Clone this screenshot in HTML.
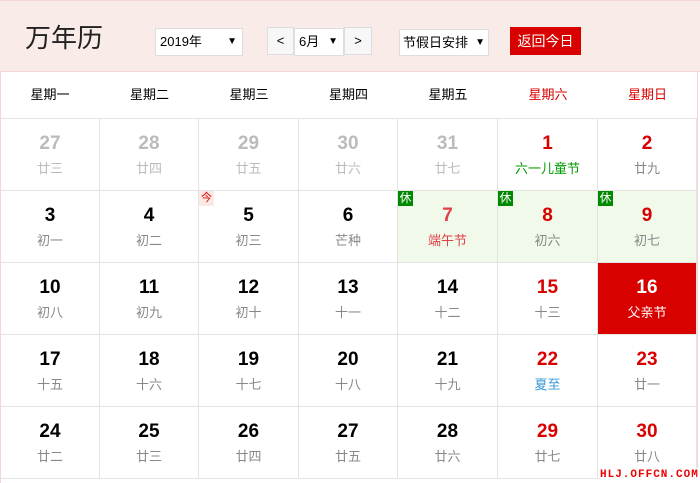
<!DOCTYPE html>
<html><head><meta charset="utf-8"><style>
*{margin:0;padding:0;box-sizing:border-box}
body{width:700px;height:483px;background:#fff;font-family:"Liberation Sans","Noto Sans CJK SC",sans-serif;position:relative;overflow:hidden}
.hd{position:absolute;left:0;top:0;width:700px;height:72px;background:#f9ebe8;border-top:1px solid #f2d8d4;border-bottom:1px solid #f2d8d4}
.title{position:absolute;left:25px;top:17px;font-size:26px;color:#222}
.sel{position:absolute;background:#fff;border:1px solid #ddd;font-size:13px;color:#000;line-height:26px;padding-left:4px}
.sel .ar{position:absolute;right:5px;top:0;font-size:10px}
.btn{position:absolute;background:#f7f7f7;border:1px solid #ddd;font-size:13px;line-height:26px;text-align:center}
.today{position:absolute;left:510px;top:26px;width:71px;height:28px;background:#d90000;color:#fff;font-size:14px;line-height:28px;text-align:center}
.wk{position:absolute;top:72px;height:46px;line-height:46px;text-align:center;font-size:13px;color:#000}
.grid{position:absolute;left:1px;top:118px;display:grid;grid-template-columns:99px 99px 100px 99px 100px 100px 99px;grid-template-rows:repeat(5,72px)}
.c{position:relative;border-right:1px solid #e3e3e3;border-top:1px solid #e3e3e3;text-align:center}
.n{position:absolute;left:0;right:0;top:14px;font-size:19px;font-weight:bold;line-height:22px}
.l{position:absolute;left:0;right:0;top:42px;font-size:13px;color:#888;line-height:16px}
.g .n,.g .l{color:#bbb}
.r .n{color:#d90000}
.hol{background:#f1f9ea}
.xiu{position:absolute;left:0;top:0;width:15px;height:15px;background:#080;color:#fff;font-size:12px;line-height:15px;text-align:center}
.jin{position:absolute;left:0;top:0;width:15px;height:15px;background:#fbe9e6;color:#d00;font-size:11px;line-height:15px;text-align:center}
</style></head><body>
<div class="hd">
<div class="title">万年历</div>
<div class="sel" style="left:155px;top:27px;width:88px;height:28px">2019年<span class="ar">▼</span></div>
<div class="btn" style="left:267px;top:26px;width:27px;height:28px">&lt;</div>
<div class="sel" style="left:294px;top:27px;width:50px;height:28px">6月<span class="ar">▼</span></div>
<div class="btn" style="left:344px;top:26px;width:28px;height:28px">&gt;</div>
<div class="sel" style="left:399px;top:28px;width:90px;height:27px;padding-left:3px">节假日安排<span class="ar" style="right:3px">▼</span></div>
<div class="today">返回今日</div>
</div>
<div style="position:absolute;left:697px;top:72px;width:1px;height:411px;background:#f2d8d4"></div>
<div style="position:absolute;left:0;top:72px;width:1px;height:411px;background:#f2d8d4"></div>
<div class="wk" style="left:0;width:100px">星期一</div>
<div class="wk" style="left:100px;width:99px">星期二</div>
<div class="wk" style="left:199px;width:100px">星期三</div>
<div class="wk" style="left:299px;width:99px">星期四</div>
<div class="wk" style="left:398px;width:100px">星期五</div>
<div class="wk" style="left:498px;width:100px;color:#d90000">星期六</div>
<div class="wk" style="left:598px;width:99px;color:#d90000">星期日</div>
<div class="grid">
<div class="c g"><div class="n">27</div><div class="l">廿三</div></div>
<div class="c g"><div class="n">28</div><div class="l">廿四</div></div>
<div class="c g"><div class="n">29</div><div class="l">廿五</div></div>
<div class="c g"><div class="n">30</div><div class="l">廿六</div></div>
<div class="c g"><div class="n">31</div><div class="l">廿七</div></div>
<div class="c r"><div class="n">1</div><div class="l" style="color:#090">六一儿童节</div></div>
<div class="c r"><div class="n">2</div><div class="l">廿九</div></div>

<div class="c"><div class="n">3</div><div class="l">初一</div></div>
<div class="c"><div class="n">4</div><div class="l">初二</div></div>
<div class="c"><div class="jin">今</div><div class="n">5</div><div class="l">初三</div></div>
<div class="c"><div class="n">6</div><div class="l">芒种</div></div>
<div class="c r hol"><div class="xiu">休</div><div class="n" style="color:#e0404a">7</div><div class="l" style="color:#e0404a">端午节</div></div>
<div class="c r hol"><div class="xiu">休</div><div class="n">8</div><div class="l">初六</div></div>
<div class="c r hol"><div class="xiu">休</div><div class="n">9</div><div class="l">初七</div></div>

<div class="c"><div class="n">10</div><div class="l">初八</div></div>
<div class="c"><div class="n">11</div><div class="l">初九</div></div>
<div class="c"><div class="n">12</div><div class="l">初十</div></div>
<div class="c"><div class="n">13</div><div class="l">十一</div></div>
<div class="c"><div class="n">14</div><div class="l">十二</div></div>
<div class="c r"><div class="n">15</div><div class="l">十三</div></div>
<div class="c" style="background:#d90000"><div class="n" style="color:#fff">16</div><div class="l" style="color:#fff">父亲节</div></div>

<div class="c"><div class="n">17</div><div class="l">十五</div></div>
<div class="c"><div class="n">18</div><div class="l">十六</div></div>
<div class="c"><div class="n">19</div><div class="l">十七</div></div>
<div class="c"><div class="n">20</div><div class="l">十八</div></div>
<div class="c"><div class="n">21</div><div class="l">十九</div></div>
<div class="c r"><div class="n">22</div><div class="l" style="color:#3a9ad9">夏至</div></div>
<div class="c r"><div class="n">23</div><div class="l">廿一</div></div>

<div class="c"><div class="n">24</div><div class="l">廿二</div></div>
<div class="c"><div class="n">25</div><div class="l">廿三</div></div>
<div class="c"><div class="n">26</div><div class="l">廿四</div></div>
<div class="c"><div class="n">27</div><div class="l">廿五</div></div>
<div class="c"><div class="n">28</div><div class="l">廿六</div></div>
<div class="c r"><div class="n">29</div><div class="l">廿七</div></div>
<div class="c r"><div class="n">30</div><div class="l">廿八</div></div>
</div>
<div style="position:absolute;left:0;top:478px;width:700px;height:1px;background:#e3e3e3"></div>
<div style="position:absolute;left:600px;top:468px;width:100px;height:15px;background:#fff;color:#e00;font-family:'Liberation Mono',monospace;font-weight:bold;font-size:11px;line-height:15px;letter-spacing:1px">HLJ.OFFCN.COM</div>
</body></html>
